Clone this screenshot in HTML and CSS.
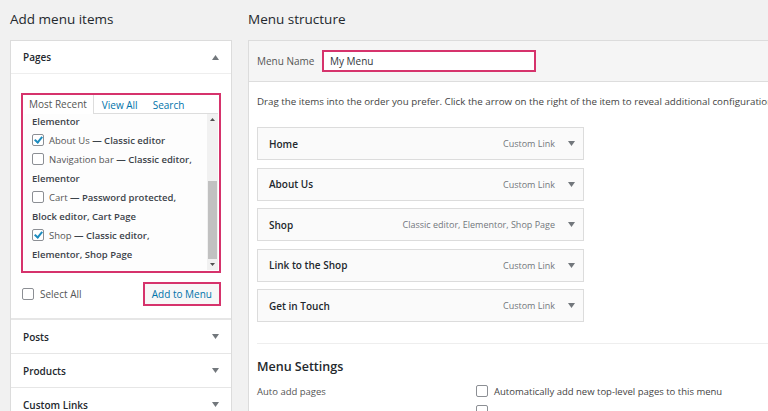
FILE: index.html
```html
<!DOCTYPE html>
<html lang="en">
  <head>
    <title>Menus</title>
    <link rel="stylesheet" href="styles.css">
  </head>

  <body>
    <div class="page">
      <div class="col-left">
        <h2>Add menu items</h2>
        <div class="accordion">
          <div class="acc-head open">
            <span>Pages</span>
            <svg class="arrow" width="7" height="5" viewBox="0 0 7 5"><path d="M0 5 L3.5 0 L7 5 Z"/></svg>
          </div>
          <div class="acc-body">
            <div class="pages-box">
              <div class="tabs">
                <span class="tab active">Most Recent</span>
                <span class="tab">View All</span>
                <span class="tab">Search</span>
              </div>
              <div class="tab-panel">
                <ul class="checklist">
                  <li><b>Elementor</b></li>
                  <li><span class="cb checked"></span>About Us <b>— Classic editor</b></li>
                  <li><span class="cb"></span>Navigation bar <b>— Classic editor,</b><br><b>Elementor</b></li>
                  <li><span class="cb"></span>Cart <b>— Password protected,</b><br><b>Block editor, Cart Page</b></li>
                  <li><span class="cb checked"></span>Shop <b>— Classic editor,</b><br><b>Elementor, Shop Page</b></li>
                </ul>
                <div class="scrollbar">
                  <svg class="sb-arrow" width="5" height="3" viewBox="0 0 5 3"><path d="M0 3 L2.5 0 L5 3 Z"/></svg>
                  <div class="sb-track"><div class="sb-thumb"></div></div>
                  <svg class="sb-arrow" width="5" height="3" viewBox="0 0 5 3"><path d="M0 0 L2.5 3 L5 0 Z"/></svg>
                </div>
              </div>
            </div>
            <div class="actions">
              <label class="select-all"><span class="cb"></span>Select All</label>
              <span class="add-btn">Add to Menu</span>
            </div>
          </div>
          <div class="acc-head">
            <span>Posts</span>
            <svg class="arrow" width="7" height="5" viewBox="0 0 7 5"><path d="M0 0 L3.5 5 L7 0 Z"/></svg>
          </div>
          <div class="acc-head">
            <span>Products</span>
            <svg class="arrow" width="7" height="5" viewBox="0 0 7 5"><path d="M0 0 L3.5 5 L7 0 Z"/></svg>
          </div>
          <div class="acc-head">
            <span>Custom Links</span>
            <svg class="arrow" width="7" height="5" viewBox="0 0 7 5"><path d="M0 0 L3.5 5 L7 0 Z"/></svg>
          </div>
        </div>
      </div>

      <div class="col-right">
        <h2>Menu structure</h2>
        <div class="menu-panel">
          <div class="menu-head">
            <span class="label">Menu Name</span>
            <span class="name-input">My Menu</span>
          </div>
          <div class="menu-body">
            <p class="hint">Drag the items into the order you prefer. Click the arrow on the right of the item to reveal additional configuration options.</p>
            <div class="menu-items">
              <div class="menu-item"><b>Home</b><span class="type">Custom Link</span><svg class="arrow" width="7" height="5" viewBox="0 0 7 5"><path d="M0 0 L3.5 5 L7 0 Z"/></svg></div>
              <div class="menu-item"><b>About Us</b><span class="type">Custom Link</span><svg class="arrow" width="7" height="5" viewBox="0 0 7 5"><path d="M0 0 L3.5 5 L7 0 Z"/></svg></div>
              <div class="menu-item"><b>Shop</b><span class="type">Classic editor, Elementor, Shop Page</span><svg class="arrow" width="7" height="5" viewBox="0 0 7 5"><path d="M0 0 L3.5 5 L7 0 Z"/></svg></div>
              <div class="menu-item"><b>Link to the Shop</b><span class="type">Custom Link</span><svg class="arrow" width="7" height="5" viewBox="0 0 7 5"><path d="M0 0 L3.5 5 L7 0 Z"/></svg></div>
              <div class="menu-item"><b>Get in Touch</b><span class="type">Custom Link</span><svg class="arrow" width="7" height="5" viewBox="0 0 7 5"><path d="M0 0 L3.5 5 L7 0 Z"/></svg></div>
            </div>
            <div class="settings">
              <h3>Menu Settings</h3>
              <div class="setting-row">
                <span class="setting-label">Auto add pages</span>
                <label class="setting-opt"><span class="cb"></span>Automatically add new top-level pages to this menu</label>
              </div>
              <div class="setting-row">
                <span class="setting-label"></span>
                <label class="setting-opt"><span class="cb"></span></label>
              </div>
            </div>
          </div>
        </div>
      </div>
    </div>
  </body>
</html>
```

FILE: styles.css
```css
body {
  margin: 0;
  background-color: #f1f1f1;
  font-family: "Open Sans", "Noto Sans", sans-serif;
  color: #444;
  font-size: 9.5px;
  height: 411px;
  overflow: hidden;
}

.page {
  display: flex;
  padding-left: 10px;
  gap: 16px;
}

h2 {
  margin: 0;
  height: 40px;
  line-height: 38px;
  font-size: 13.5px;
  font-weight: 400;
  color: #23282d;
}

.col-left {
  width: 222px;
  flex-shrink: 0;
}

.col-right {
  flex: 1;
  min-width: 0;
}

/* left accordion */
.accordion {
  background: white;
  border: 1px solid #dcdcdc;
}

.acc-head {
  display: flex;
  justify-content: space-between;
  align-items: center;
  height: 33px;
  padding: 0 12px 0 12px;
  border-top: 1px solid #e6e6e6;
  font-weight: 600;
  font-size: 10px;
  color: #23282d;
}
.acc-head.open {
  border-top: none;
  height: 32px;
  border-bottom: 1px solid #eeeeee;
}

.arrow {
  fill: #72777c;
}

.acc-body {
  padding: 19px 10px 12px 10px;
  border-bottom: 1px solid #e6e6e6;
}

.pages-box {
  border: 2px solid #d6336c;
  padding: 0 1px 1px 1px;
}

.tabs {
  display: flex;
  height: 19px;
  align-items: flex-end;
}
.tab {
  padding: 0 7px 0 8px;
  line-height: 18px;
  color: #0073aa;
  font-size: 10px;
}
.tab.active {
  padding: 0 6px 0 5px;
  color: #555;
  background: white;
  border-right: 1px solid #dddddd;
  line-height: 19px;
}

.tab-panel {
  display: flex;
  height: 156px;
  border-top: 1px solid #dddddd;
  margin-top: -1px;
  overflow: hidden;
  background: #fdfdfd;
}

.checklist {
  flex: 1;
  list-style: none;
  margin: -2px 0 0 0;
  padding: 0 0 0 8px;
  line-height: 19px;
  color: #555;
}
.checklist b {
  font-weight: 600;
  color: #3c434a;
}
.checklist .cb {
  margin-right: 5px;
}

.cb {
  display: inline-block;
  width: 10px;
  height: 10px;
  border: 1px solid #8c8f94;
  border-radius: 2px;
  background: white;
  vertical-align: -2px;
  position: relative;
}
.cb.checked::after {
  content: "";
  position: absolute;
  left: 3px;
  top: 0px;
  width: 3px;
  height: 6px;
  border: solid #1e8cbe;
  border-width: 0 2px 2px 0;
  transform: rotate(40deg);
}

.scrollbar {
  width: 11px;
  display: flex;
  flex-direction: column;
  align-items: center;
  background: #f1f1f1;
  fill: #505050;
}
.sb-arrow {
  margin: 4px 0;
}
.sb-track {
  flex: 1;
  width: 100%;
  display: flex;
  flex-direction: column;
  justify-content: flex-end;
}
.sb-thumb {
  height: 78px;
  margin: 0 1px;
  background: #c1c1c1;
}

.actions {
  display: flex;
  justify-content: space-between;
  align-items: center;
  margin-top: 9px;
  padding-left: 1px;
}
.select-all {
  color: #555;
  font-size: 10px;
}
.select-all .cb {
  margin-right: 6px;
}
.add-btn {
  border: 2px solid #d6336c;
  background: #f7f7f7;
  color: #0073aa;
  padding: 0 7px;
  line-height: 20px;
  font-size: 10px;
}

/* right panel */
.menu-panel {
  width: 560px;
  border: 1px solid #dcdcdc;
  background: white;
}

.menu-head {
  display: flex;
  align-items: center;
  height: 40px;
  padding-left: 8px;
  background: #f5f5f5;
  border-bottom: 1px solid #dddddd;
}
.label {
  color: #555;
  width: 65px;
  font-size: 10px;
}
.name-input {
  width: 204px;
  height: 18px;
  line-height: 18px;
  border: 2px solid #d6336c;
  background: white;
  padding-left: 6px;
  color: #32373c;
  font-size: 10px;
}

.menu-body {
  padding: 0 0 0 8px;
}

.hint {
  margin: 0;
  padding-top: 11px;
  line-height: 17px;
  white-space: nowrap;
  color: #444;
  font-size: 9.75px;
}

.menu-items {
  margin-top: 17px;
  width: 327px;
  display: flex;
  flex-direction: column;
  gap: 7.5px;
}

.menu-item {
  display: flex;
  align-items: center;
  height: 31px;
  border: 1px solid #dcdcdc;
  background: #fafafa;
  padding: 0 8px 0 11px;
}
.menu-item b {
  flex: 1;
  font-weight: 600;
  font-size: 10px;
  color: #23282d;
}
.menu-item .type {
  color: #72777c;
  font-size: 9px;
  margin-right: 13px;
}

.settings {
  margin-top: 21px;
  border-top: 1px solid #eeeeee;
  padding-top: 13px;
}
.settings h3 {
  margin: 0 0 5px 0;
  font-size: 12.5px;
  font-weight: 600;
  color: #23282d;
  line-height: 20px;
}
.setting-row {
  display: flex;
  line-height: 20px;
}
.setting-label {
  width: 219px;
  color: #555;
}
.setting-opt {
  color: #444;
}
.setting-opt .cb {
  margin-right: 6px;
}
```
